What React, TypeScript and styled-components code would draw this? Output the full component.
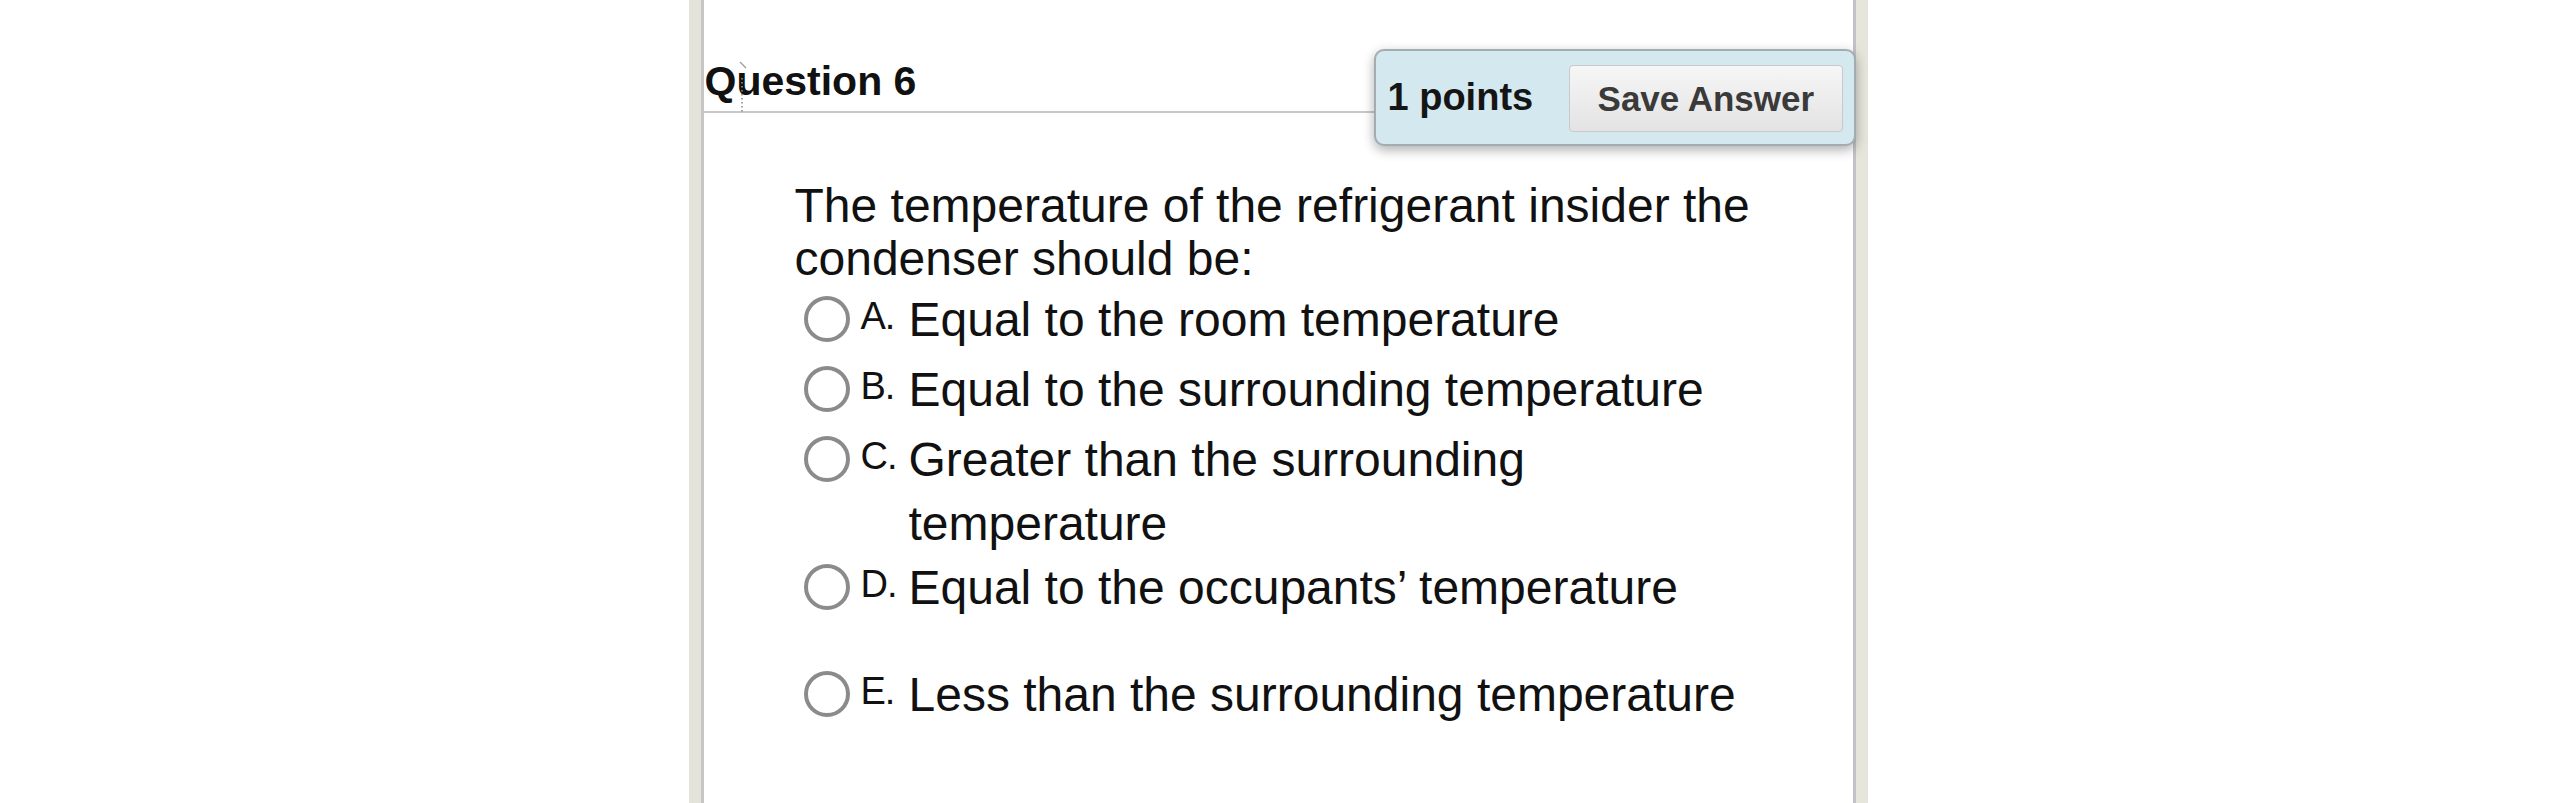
import React from "react";
import styled, { createGlobalStyle } from "styled-components";

const GlobalStyle = createGlobalStyle`
  html, body {
    margin: 0;
    padding: 0;
    background: #ffffff;
  }
  body {
    font-family: "Liberation Sans", Arial, Helvetica, sans-serif;
    color: #111111;
  }
`;

const Page = styled.div`
  display: flex;
  justify-content: center;
  min-height: 100vh;
  overflow: hidden;
`;

const Frame = styled.div`
  width: 1179px;
  box-sizing: border-box;
  padding: 0 12px;
  background: linear-gradient(90deg, #e4e3d9 0%, #efeee7 50%, #e6e5dc 100%);
  display: flex;
`;

const Panel = styled.div`
  position: relative;
  flex: 1;
  background: #ffffff;
  border-left: 3px solid #c6c6c6;
  border-right: 3px solid #c2c2c8;
  min-height: 803px;
`;

const HeaderRow = styled.div`
  display: flex;
  align-items: flex-start;
  padding-top: 49px;
  margin-right: -3px;
`;

const Title = styled.h2`
  flex: 1;
  margin: 9px 0 0 0;
  padding: 0 0 7px 1px;
  font-size: 41px;
  line-height: 46px;
  font-weight: 700;
  color: #111111;
  border-bottom: 2px solid #c9c9c9;
`;

const PointsBox = styled.div`
  display: flex;
  align-items: center;
  gap: 36px;
  width: 482px;
  height: 97px;
  box-sizing: border-box;
  padding: 0 11px 0 12px;
  background: #d3e8ef;
  border: 2px solid #a3acb0;
  border-radius: 10px;
  box-shadow: 0 4px 12px rgba(0, 0, 0, 0.32);
  position: relative;
  z-index: 1;
`;

const Points = styled.span`
  font-size: 38px;
  font-weight: 700;
  color: #151515;
  white-space: nowrap;
`;

const SaveButton = styled.button`
  width: 274px;
  height: 67px;
  margin-top: 2px;
  border: 1px solid #c9c9c9;
  border-radius: 4px;
  background: linear-gradient(180deg, #f6f6f6 0%, #e3e3e3 100%);
  font-family: "Liberation Sans", Arial, sans-serif;
  font-size: 35px;
  font-weight: 700;
  color: #3a3a3a;
  padding: 0;
  cursor: pointer;
`;

const Body = styled.div`
  padding: 33px 0 0 91px;
  width: 976px;
`;

const Prompt = styled.p`
  margin: 0 0 3px 0;
  font-size: 48px;
  line-height: 53px;
  color: #111111;
`;

const Options = styled.div`
  display: flex;
  flex-direction: column;
  margin-left: 9px;
`;

const OptionRow = styled.label<{ $after: number }>`
  display: grid;
  grid-template-columns: 46px 59px 1fr;
  align-items: start;
  margin-bottom: ${(p) => p.$after}px;
  cursor: pointer;
`;

const Radio = styled.span`
  width: 46px;
  height: 46px;
  margin-top: 8px;
  box-sizing: border-box;
  border: 4px solid #8b8b8b;
  border-radius: 50%;
  background: #ffffff;
`;

const Letter = styled.span`
  margin-top: 9px;
  padding-left: 11px;
  font-size: 38px;
  line-height: 38px;
  letter-spacing: -1px;
  color: #111111;
`;

const OptionText = styled.span`
  font-size: 48px;
  line-height: 64px;
  color: #111111;
`;

const Cursor = styled.svg`
  position: absolute;
  left: 33px;
  top: 58px;
  pointer-events: none;
`;

const options = [
  { letter: "A.", text: "Equal to the room temperature", after: 6 },
  { letter: "B.", text: "Equal to the surrounding temperature", after: 6 },
  { letter: "C.", text: "Greater than the surrounding temperature", after: 0 },
  { letter: "D.", text: "Equal to the occupants\u2019 temperature", after: 43 },
  { letter: "E.", text: "Less than the surrounding temperature", after: 0 },
];

export default function App() {
  return (
    <>
      <GlobalStyle />
      <Page>
        <Frame>
          <Panel>
            <HeaderRow>
              <Title>Question 6</Title>
              <PointsBox>
                <Points>1 points</Points>
                <SaveButton>Save Answer</SaveButton>
              </PointsBox>
            </HeaderRow>
            <Body>
              <Prompt>
                The temperature of the refrigerant insider the condenser should be:
              </Prompt>
              <Options>
                {options.map((o) => (
                  <OptionRow key={o.letter} $after={o.after}>
                    <Radio />
                    <Letter>{o.letter}</Letter>
                    <OptionText>{o.text}</OptionText>
                  </OptionRow>
                ))}
              </Options>
            </Body>
            <Cursor width="20" height="60" viewBox="0 0 20 60">
              <path d="M3 4 L9 10" stroke="#9a9a9a" strokeWidth="1.2" fill="none" />
              <path
                d="M5 20 L5 56"
                stroke="#8e8e8e"
                strokeWidth="1.6"
                strokeDasharray="1.6 2.4"
                fill="none"
              />
            </Cursor>
          </Panel>
        </Frame>
      </Page>
    </>
  );
}
